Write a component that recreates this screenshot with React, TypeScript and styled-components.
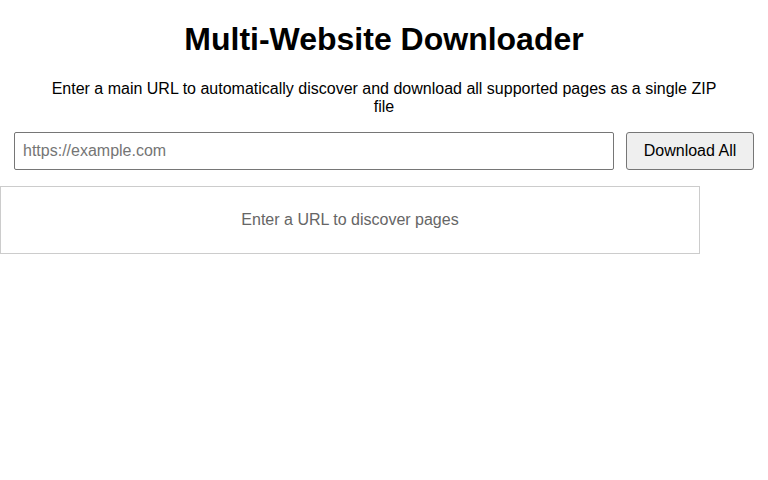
import React, { useState } from "react";
import styled, { createGlobalStyle } from "styled-components";

const GlobalStyle = createGlobalStyle`
  body {
    margin: 0;
    background: #ffffff;
    font-family: "Liberation Sans", Arial, sans-serif;
    color: #000000;
  }
`;

export default function App() {
  const [url, setUrl] = useState("");

  return (
    <Page>
      <GlobalStyle />
      <Header>
        <Title>Multi-Website Downloader</Title>
        <Subtitle>
          Enter a main URL to automatically discover and download all supported
          pages as a single ZIP file
        </Subtitle>
      </Header>
      <UrlForm onSubmit={(e) => e.preventDefault()}>
        <UrlInput
          type="text"
          placeholder="https://example.com"
          value={url}
          onChange={(e) => setUrl(e.target.value)}
        />
        <DownloadButton type="submit">Download All</DownloadButton>
      </UrlForm>
      <Results>
        <EmptyText>Enter a URL to discover pages</EmptyText>
      </Results>
    </Page>
  );
}

const Page = styled.div`
  display: flex;
  flex-direction: column;
  padding-top: 21px;
`;

const Header = styled.header`
  display: flex;
  flex-direction: column;
  align-items: center;
  padding: 0 40px;
  text-align: center;
`;

const Title = styled.h1`
  margin: 0;
  font-size: 32px;
  line-height: 37px;
  font-weight: bold;
`;

const Subtitle = styled.p`
  margin: 22px 0 0;
  font-size: 16px;
  line-height: 18px;
  max-width: 680px;
`;

const UrlForm = styled.form`
  display: flex;
  gap: 12px;
  margin-top: 16px;
  padding: 0 14px;
`;

const UrlInput = styled.input`
  flex: 1;
  height: 38px;
  box-sizing: border-box;
  padding: 8px;
  font-size: 16px;
  font-family: inherit;
  border: 1px solid #767676;
  border-radius: 2px;
  color: #000;

  &::placeholder {
    color: #757575;
  }
`;

const DownloadButton = styled.button`
  width: 128px;
  height: 38px;
  box-sizing: border-box;
  padding: 8px 16px;
  font-size: 16px;
  font-family: inherit;
  color: #000;
  background: #efefef;
  border: 1px solid #767676;
  border-radius: 3px;
  cursor: pointer;
`;

const Results = styled.div`
  width: 700px;
  box-sizing: border-box;
  margin-top: 16px;
  padding: 24px 20px;
  border: 1px solid #cccccc;
  text-align: center;
`;

const EmptyText = styled.p`
  margin: 0;
  font-size: 16px;
  line-height: 18px;
  color: #666666;
`;
